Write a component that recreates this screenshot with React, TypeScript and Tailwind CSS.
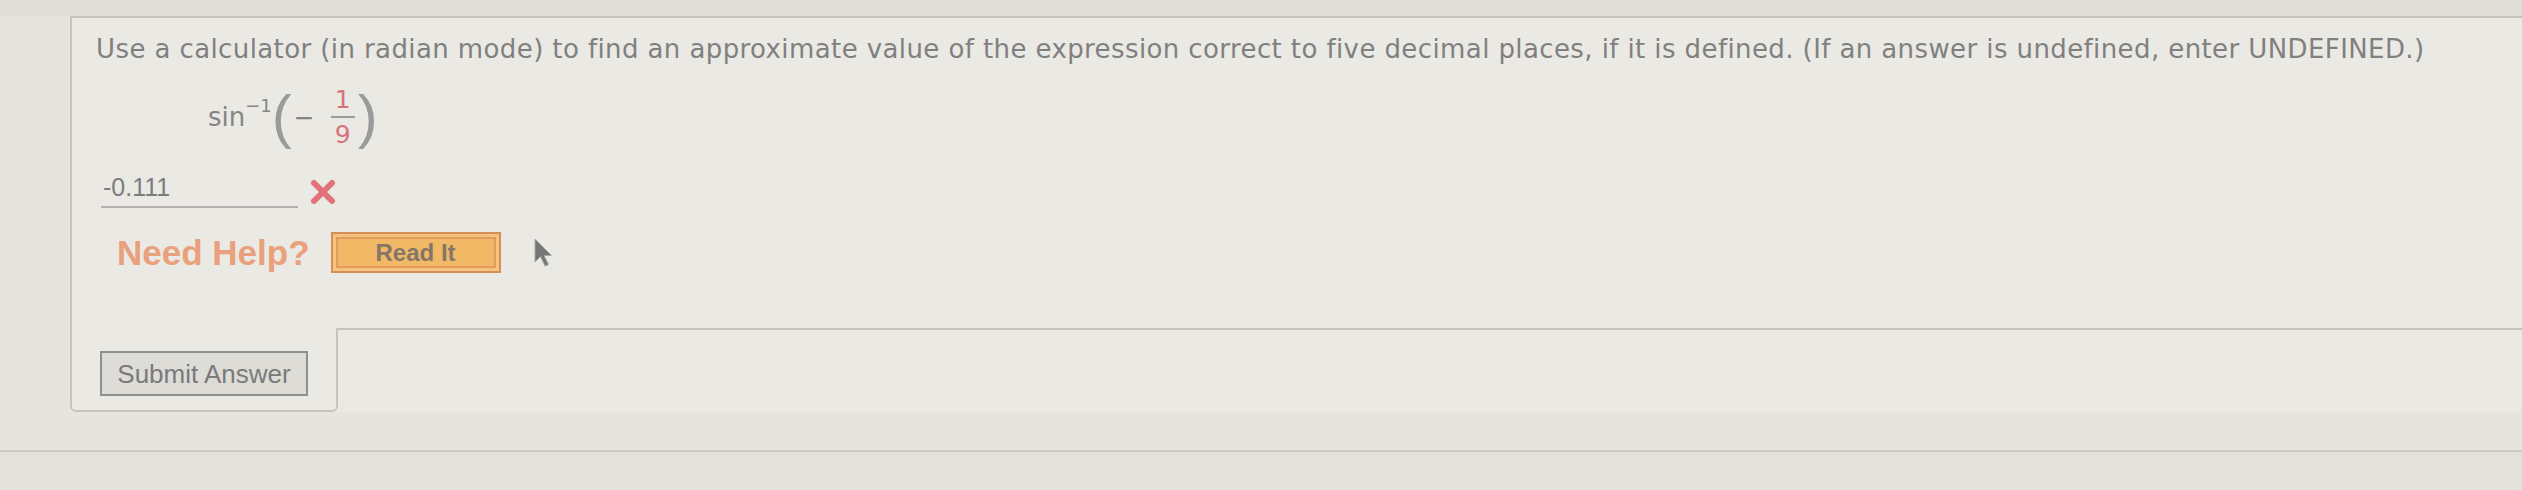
export default function App() {
  return (
    <div className="w-full h-[490px] bg-[#e6e4df] overflow-hidden flex flex-col">
      {/* top strip */}
      <div className="h-[16px] bg-[#e0ded9]" />

      {/* question panel */}
      <div className="ml-[70px] flex flex-col bg-[#ebe9e3]">
        <div className="h-[312px] border-t-2 border-l-2 border-[#c6c4bf] pt-[16px] pl-[24px]">
          <p className="font-['DejaVu_Sans',Verdana,sans-serif] text-[26px] tracking-[0.4px] leading-[30px] text-[#808081] whitespace-nowrap">
            Use a calculator (in radian mode) to find an approximate value of the expression correct to five decimal
            places, if it is defined. (If an answer is undefined, enter UNDEFINED.)
          </p>

          {/* sin^-1(-1/9) */}
          <div className="mt-[22px] ml-[112px] h-[62px] flex items-center text-[#858586] font-['DejaVu_Sans',Verdana,sans-serif]">
            <span className="text-[26px] leading-none">sin</span>
            <span className="self-start mt-[11px] text-[18px] leading-none">−1</span>
            <span className="font-['Liberation_Sans',Arial,sans-serif] text-[60px] leading-none text-[#9a9a9b]">(</span>
            <span className="text-[25px] leading-none ml-[2px]">−</span>
            <span className="ml-[16px] flex flex-col items-center text-[#d8737c] text-[25px] leading-none">
              <span>1</span>
              <span className="w-[24px] h-[2px] bg-[#9a9a9b] my-[4px]" />
              <span>9</span>
            </span>
            <span className="ml-[3px] font-['Liberation_Sans',Arial,sans-serif] text-[60px] leading-none text-[#9a9a9b]">)</span>
          </div>

          {/* answer */}
          <div className="mt-[27px] ml-[5px] flex items-center">
            <div className="w-[197px] border-b-2 border-[#b2b1ad] pb-[6px] pl-[2px] font-['Liberation_Sans',Arial,sans-serif] text-[25px] leading-none text-[#7c7c7d]">
              -0.111
            </div>
            <svg className="ml-[11px]" width="28" height="28" viewBox="0 0 28 28">
              <path d="M5 5 L23 23 M23 5 L5 23" stroke="#e3717a" strokeWidth="6" strokeLinecap="round" />
            </svg>
          </div>

          {/* need help */}
          <div className="mt-[24px] ml-[21px] flex items-center">
            <span className="font-['Liberation_Sans',Arial,sans-serif] font-bold text-[35px] leading-none text-[#e9a07c]">
              Need Help?
            </span>
            <div className="ml-[21px] w-[170px] h-[41px] border-2 border-[#d78d58] bg-[#f4c47f] p-[3px] flex">
              <div className="flex-1 border-2 border-[#e29b5c] bg-[#f1b866] flex items-center justify-center font-['Liberation_Sans',Arial,sans-serif] font-bold text-[24px] leading-none text-[#857667]">
                Read It
              </div>
            </div>
            <svg className="ml-[32px]" width="22" height="32" viewBox="0 0 22 32">
              <path d="M2 2 L2 25 L7.5 19.5 L12 29 L15.5 27.5 L11 18.5 L18.5 18.5 Z" fill="#767677" stroke="#a9a8a5" strokeWidth="1" strokeLinejoin="round" />
            </svg>
          </div>
        </div>

        {/* bottom of panel */}
        <div className="flex">
          <div className="w-[268px] h-[84px] border-l-2 border-r-2 border-b-2 border-[#c6c4bf] rounded-b-[6px] pt-[23px] pl-[28px]">
            <div className="w-[208px] h-[45px] border-2 border-[#90908d] bg-[#dddcd7] flex items-center justify-center font-['Liberation_Sans',Arial,sans-serif] text-[26px] leading-none text-[#7a7a7b]">
              Submit Answer
            </div>
          </div>
          <div className="flex-1 border-t-2 border-[#c6c4bf] bg-[#ebe9e3]" />
        </div>
      </div>

      <div className="mt-[38px] flex-1 border-t-2 border-[#cbc9c4] bg-[#e3e1db]" />
    </div>
  );
}
